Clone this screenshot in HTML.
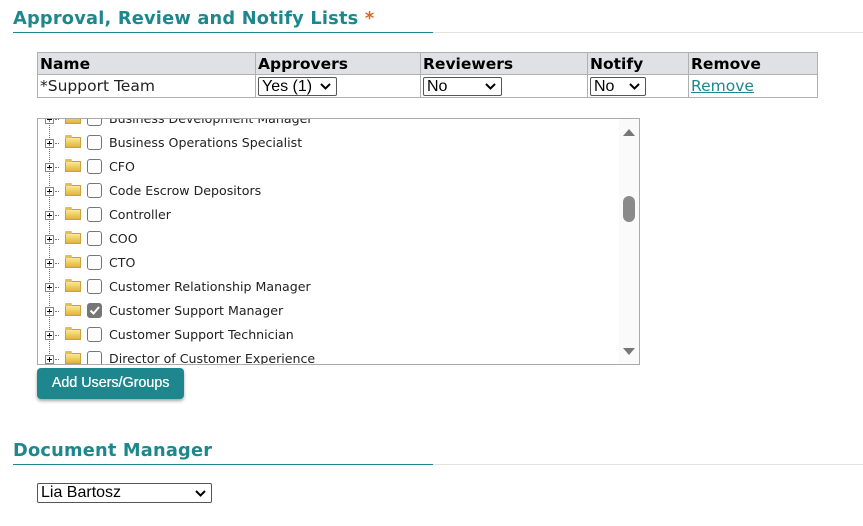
<!DOCTYPE html>
<html><head><style>
body{margin:0;width:863px;height:526px;background:#fff;position:relative;overflow:hidden;font-family:"DejaVu Sans",Verdana,sans-serif;}
.h{position:absolute;left:13px;font-weight:bold;color:#1e878e;font-size:17.8px;letter-spacing:0.2px}
.ln{position:absolute;left:13px;height:1px;background:#1e878e;width:420px}
.lg{position:absolute;left:433px;height:1px;background:#e2e2e2;width:430px}
table{position:absolute;left:37px;top:52px;border-collapse:collapse;width:781px}
td,th{border:1px solid #b0b0b0;padding:0 2px;text-align:left;font-size:16px}
th{background:#dfe1e4;height:21px;font-weight:bold;font-family:"DejaVu Sans",sans-serif;font-size:15.5px}
td{height:22px;font-family:"DejaVu Sans",sans-serif;font-size:15.5px;color:#222}
.sel{display:inline-block;border:1px solid #555;border-radius:2px;height:19px;box-sizing:border-box;font-family:"Liberation Sans",Arial,sans-serif;font-size:16px;line-height:17px;padding-left:3px;position:relative;vertical-align:middle;color:#000}
.sel svg{position:absolute;right:5px;top:5px}
a{color:#1e878e}
.tree{position:absolute;left:37px;top:118px;width:601px;height:245px;border:1px solid #aaa;overflow:hidden}
.row{position:absolute;left:0;height:24px;width:580px}
.pl{position:absolute;left:7px;top:8px;width:7px;height:7px;border:1px solid #888;background:#fff}
.pl:before{content:"";position:absolute;left:1px;top:3px;width:5px;height:1px;background:#000}
.pl:after{content:"";position:absolute;left:3px;top:1px;width:1px;height:5px;background:#000}
.dash{position:absolute;left:17px;top:12px;width:4px;border-top:1px dotted #777}
.vl{position:absolute;left:11px;top:-11px;height:18px;border-left:1px dotted #777}
.fo{position:absolute;left:27px;top:6px;width:16px;height:11px;background:linear-gradient(#fbe79a,#e0b536);border:1px solid #c9a23a;box-sizing:border-box}
.fo:before{content:"";position:absolute;left:-1px;top:-3px;width:7px;height:3px;background:#e6c04e;border-radius:1px 1px 0 0}
.cb{position:absolute;left:49px;top:4px;width:15px;height:15px;border:1px solid #777;border-radius:3px;box-sizing:border-box;background:#fff}
.cb.on{background:#767676;border-color:#767676}
.tx{position:absolute;left:71px;top:4px;font-size:12.6px;color:#222;white-space:nowrap}
.sb{position:absolute;right:0;top:0;width:20px;height:245px;background:#fafafa}
.btn{position:absolute;left:37px;top:368px;width:147px;height:31px;background:#1e878e;border-radius:4px;box-shadow:0 2px 3px rgba(0,0,0,.35);color:#fff;font-family:"Liberation Sans",Arial,sans-serif;font-size:14.3px;line-height:31px;text-align:center;text-shadow:0.3px 0 0 #fff}
</style></head><body>
<div class="h" style="top:8px">Approval, Review and Notify Lists <span style="color:#d2691e">*</span></div>
<div class="ln" style="top:32px"></div><div class="lg" style="top:32px"></div>
<table>
<tr><th style="width:213px">Name</th><th style="width:160px">Approvers</th><th style="width:162px">Reviewers</th><th style="width:96px">Notify</th><th>Remove</th></tr>
<tr><td>*Support Team</td>
<td><span class="sel" style="width:79px">Yes (1)<svg width="11" height="7"><path d="M1 1l4.5 4.5L10 1" stroke="#000" stroke-width="2" fill="none"/></svg></span></td>
<td><span class="sel" style="width:79px">No<svg width="11" height="7"><path d="M1 1l4.5 4.5L10 1" stroke="#000" stroke-width="2" fill="none"/></svg></span></td>
<td><span class="sel" style="width:56px">No<svg width="11" height="7"><path d="M1 1l4.5 4.5L10 1" stroke="#000" stroke-width="2" fill="none"/></svg></span></td>
<td><a href="#">Remove</a></td></tr>
</table>
<div class="tree">
<div class="row" style="top:-12px"><div class="pl"></div><div class="dash"></div><div class="fo"></div><div class="cb"></div><div class="tx">Business Development Manager</div></div>
<div class="row" style="top:12px"><div class="vl"></div><div class="pl"></div><div class="dash"></div><div class="fo"></div><div class="cb"></div><div class="tx">Business Operations Specialist</div></div>
<div class="row" style="top:36px"><div class="vl"></div><div class="pl"></div><div class="dash"></div><div class="fo"></div><div class="cb"></div><div class="tx">CFO</div></div>
<div class="row" style="top:60px"><div class="vl"></div><div class="pl"></div><div class="dash"></div><div class="fo"></div><div class="cb"></div><div class="tx">Code Escrow Depositors</div></div>
<div class="row" style="top:84px"><div class="vl"></div><div class="pl"></div><div class="dash"></div><div class="fo"></div><div class="cb"></div><div class="tx">Controller</div></div>
<div class="row" style="top:108px"><div class="vl"></div><div class="pl"></div><div class="dash"></div><div class="fo"></div><div class="cb"></div><div class="tx">COO</div></div>
<div class="row" style="top:132px"><div class="vl"></div><div class="pl"></div><div class="dash"></div><div class="fo"></div><div class="cb"></div><div class="tx">CTO</div></div>
<div class="row" style="top:156px"><div class="vl"></div><div class="pl"></div><div class="dash"></div><div class="fo"></div><div class="cb"></div><div class="tx">Customer Relationship Manager</div></div>
<div class="row" style="top:180px"><div class="vl"></div><div class="pl"></div><div class="dash"></div><div class="fo"></div><div class="cb on"><svg width="13" height="13" style="position:absolute;left:0;top:0"><path d="M2.5 6.5l3 3L11 3" stroke="#fff" stroke-width="2" fill="none"/></svg></div><div class="tx">Customer Support Manager</div></div>
<div class="row" style="top:204px"><div class="vl"></div><div class="pl"></div><div class="dash"></div><div class="fo"></div><div class="cb"></div><div class="tx">Customer Support Technician</div></div>
<div class="row" style="top:228px"><div class="vl"></div><div class="pl"></div><div class="dash"></div><div class="fo"></div><div class="cb"></div><div class="tx">Director of Customer Experience</div></div>
<div class="sb">
<svg width="20" height="245" style="position:absolute;left:0;top:0">
<path d="M4 17L10 10L16 17Z" fill="#777"/>
<rect x="4" y="77" width="12" height="26" rx="6" fill="#8a8a8a"/>
<path d="M4 229L10 236L16 229Z" fill="#777"/>
</svg></div>
</div>
<div class="btn">Add Users/Groups</div>
<div class="h" style="top:440px">Document Manager</div>
<div class="ln" style="top:464px"></div><div class="lg" style="top:464px"></div>
<span class="sel" style="position:absolute;left:37px;top:483px;width:175px;height:20px;line-height:18px">Lia Bartosz<svg width="11" height="7" style="top:6px"><path d="M1 1l4.5 4.5L10 1" stroke="#000" stroke-width="2" fill="none"/></svg></span>
</body></html>
